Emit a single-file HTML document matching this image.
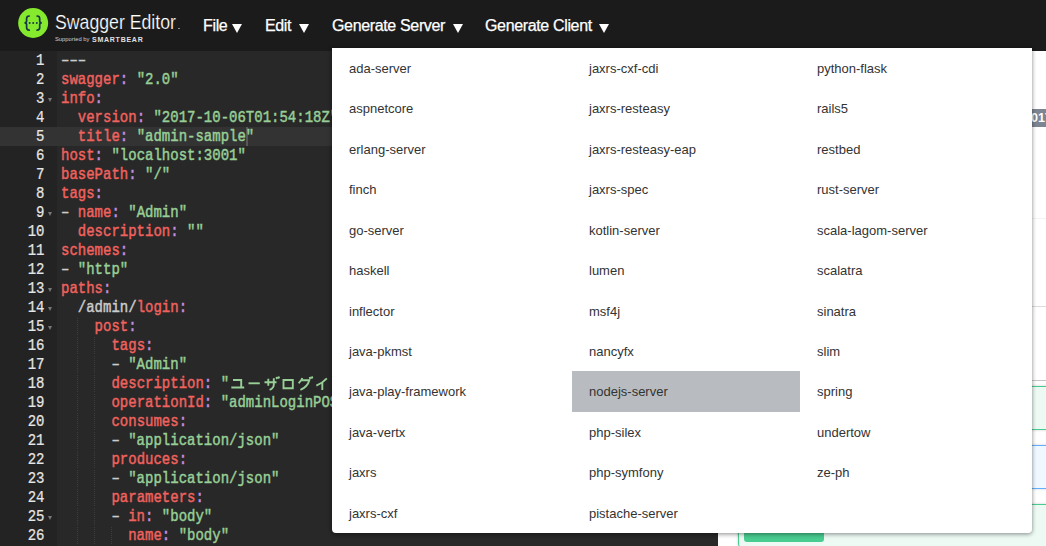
<!DOCTYPE html>
<html><head><meta charset="utf-8">
<style>
*{margin:0;padding:0;box-sizing:border-box}
html,body{width:1046px;height:546px;overflow:hidden;background:#fff;font-family:"Liberation Sans",sans-serif}
#top{position:absolute;left:0;top:0;width:1046px;height:51px;background:#1b1b1b}
#brand{position:absolute;left:55px;top:10px;color:#fff;-webkit-text-stroke:0.2px #1b1b1b;font-size:17.7px;line-height:23px;white-space:nowrap;transform:scaleY(1.13);transform-origin:0 0}
#sub{position:absolute;left:55px;top:35.5px;color:#d0d0d0;font-size:5.8px;line-height:7px;white-space:nowrap}
#sb{position:absolute;left:92px;top:36px;color:#e0e0e0;font-size:7px;line-height:8px;font-weight:bold;letter-spacing:0.75px;white-space:nowrap}
.mi{position:absolute;top:17px;color:#fff;font-size:16px;letter-spacing:-0.35px;white-space:nowrap;-webkit-text-stroke:0.25px #fff}
.tri{display:inline-block;width:0;height:0;border-left:5.2px solid transparent;border-right:5.2px solid transparent;border-top:9px solid #fff;margin-left:7.5px;vertical-align:-2px}
#ed{position:absolute;left:0;top:51px;width:718px;height:495px;background:#282828}
#gut{position:absolute;left:0;top:51px;width:57px;height:495px;background:#232323}
.al{position:absolute;left:0;width:718px;height:19px;background:#333}
.ln{position:absolute;left:0;width:44.5px;text-align:right;font-family:"Liberation Mono",monospace;font-size:14px;line-height:19px;color:#e6e6e6;font-weight:normal;-webkit-text-stroke:0.2px currentColor;transform:scaleY(1.15)}
.cl{position:absolute;left:61px;font-family:"Liberation Mono",monospace;font-size:14px;line-height:19px;color:#ccc;white-space:pre;font-weight:normal;-webkit-text-stroke:0.4px currentColor;transform:scaleY(1.15)}
.fa{position:absolute;left:48px;width:0;height:0;border-left:2.7px solid transparent;border-right:2.7px solid transparent;border-top:4.2px solid #777}
.ig{position:absolute;width:1px;height:17px;background:repeating-linear-gradient(to bottom,#3c3c3c 0 1px,transparent 1px 2px)}
.k{color:#f0625e}.s{color:#97cf97}.p{color:#c48fe0}
#right{position:absolute;left:718px;top:51px;width:328px;height:495px;background:#fff}
#dd{position:absolute;left:332px;top:48px;width:700px;height:485px;background:#fff;border-radius:0 0 4px 4px;box-shadow:0 0 4px rgba(0,0,0,.3),0 2px 4px rgba(0,0,0,.22)}
.it{position:absolute;height:40.42px;line-height:42px;font-size:13px;color:#333;white-space:nowrap;padding-left:17px}
.hl{background:#b8bcc0}
.ob{position:absolute;left:20px;width:400px;height:44px;border-radius:4px;border:1px solid #49cc90;background:#edfaf4;box-shadow:0 0 3px rgba(0,0,0,.19)}
.ob.b{border-color:#61affe;background:#eff7ff}
.mb{position:absolute;left:5px;top:5px;width:80px;height:32px;border-radius:3px;background:#49cc90}
</style></head><body>
<div id="top">
  <svg id="logosvg" width="60" height="51" style="position:absolute;left:0;top:0">
<circle cx="33.15" cy="23" r="15" fill="#85ea2d"/>
<g fill="none" stroke="#173647" stroke-width="1.7" stroke-linecap="round">
<path d="M29.2,16 C27.3,16 26.6,16.8 26.6,18.6 L26.6,21 C26.6,22.2 25.9,22.8 24.5,22.8 C25.9,22.8 26.6,23.4 26.6,24.6 L26.6,27.6 C26.6,29.4 27.3,30.2 29.2,30.2"/>
<path d="M37.1,16 C39,16 39.7,16.8 39.7,18.6 L39.7,21 C39.7,22.2 40.4,22.8 41.8,22.8 C40.4,22.8 39.7,23.4 39.7,24.6 L39.7,27.6 C39.7,29.4 39,30.2 37.1,30.2"/>
</g>
<g fill="#173647"><circle cx="29.6" cy="22.9" r="1"/><circle cx="33.2" cy="22.9" r="1"/><circle cx="36.8" cy="22.9" r="1"/></g>
</svg>
  <div id="brand">Swagger Editor</div><div style="position:absolute;left:178px;top:28px;width:2px;height:1px;background:#888"></div>
  <div id="sub">Supported by</div><div id="sb">SMARTBEAR</div>
  <div class="mi" style="left:203px">File<span class="tri" style="margin-left:5px"></span></div>
  <div class="mi" style="left:265px">Edit<span class="tri"></span></div>
  <div class="mi" style="left:332px">Generate Server<span class="tri"></span></div>
  <div class="mi" style="left:485px">Generate Client<span class="tri"></span></div>
</div>
<div id="ed"></div>
<div id="gut"></div>
<div class="al" style="top:127px"></div>
<div style="position:absolute;left:246px;top:127px;width:2px;height:19px;background:#585858"></div>
<div id="code"><!--CODE-->
<div class="ln" style="top:51px">1</div>
<div class="cl" style="top:51px">–––</div>
<div class="ln" style="top:70px">2</div>
<div class="cl" style="top:70px"><span class="k">swagger</span><span class="p">:</span> <span class="s">&quot;2.0&quot;</span></div>
<div class="ln" style="top:89px">3</div>
<div class="cl" style="top:89px"><span class="k">info</span><span class="p">:</span></div>
<div class="ln" style="top:108px">4</div>
<div class="cl" style="top:108px">  <span class="k">version</span><span class="p">:</span> <span class="s">&quot;2017-10-06T01:54:18Z&quot;</span></div>
<div class="ln" style="top:127px">5</div>
<div class="cl" style="top:127px">  <span class="k">title</span><span class="p">:</span> <span class="s">&quot;admin-sample&quot;</span></div>
<div class="ln" style="top:146px">6</div>
<div class="cl" style="top:146px"><span class="k">host</span><span class="p">:</span> <span class="s">&quot;localhost:3001&quot;</span></div>
<div class="ln" style="top:165px">7</div>
<div class="cl" style="top:165px"><span class="k">basePath</span><span class="p">:</span> <span class="s">&quot;/&quot;</span></div>
<div class="ln" style="top:184px">8</div>
<div class="cl" style="top:184px"><span class="k">tags</span><span class="p">:</span></div>
<div class="ln" style="top:203px">9</div>
<div class="cl" style="top:203px">– <span class="k">name</span><span class="p">:</span> <span class="s">&quot;Admin&quot;</span></div>
<div class="ln" style="top:222px">10</div>
<div class="cl" style="top:222px">  <span class="k">description</span><span class="p">:</span> <span class="s">&quot;&quot;</span></div>
<div class="ln" style="top:241px">11</div>
<div class="cl" style="top:241px"><span class="k">schemes</span><span class="p">:</span></div>
<div class="ln" style="top:260px">12</div>
<div class="cl" style="top:260px">– <span class="s">&quot;http&quot;</span></div>
<div class="ln" style="top:279px">13</div>
<div class="cl" style="top:279px"><span class="k">paths</span><span class="p">:</span></div>
<div class="ln" style="top:298px">14</div>
<div class="cl" style="top:298px">  /admin/<span class="k">login</span><span class="p">:</span></div>
<div class="ln" style="top:317px">15</div>
<div class="cl" style="top:317px">    <span class="k">post</span><span class="p">:</span></div>
<div class="ln" style="top:336px">16</div>
<div class="cl" style="top:336px">      <span class="k">tags</span><span class="p">:</span></div>
<div class="ln" style="top:355px">17</div>
<div class="cl" style="top:355px">      – <span class="s">&quot;Admin&quot;</span></div>
<div class="ln" style="top:374px">18</div>
<div class="cl" style="top:374px">      <span class="k">description</span><span class="p">:</span> <span class="s">&quot;</span></div>
<div class="ln" style="top:393px">19</div>
<div class="cl" style="top:393px">      <span class="k">operationId</span><span class="p">:</span> <span class="s">&quot;adminLoginPOST&quot;</span></div>
<div class="ln" style="top:412px">20</div>
<div class="cl" style="top:412px">      <span class="k">consumes</span><span class="p">:</span></div>
<div class="ln" style="top:431px">21</div>
<div class="cl" style="top:431px">      – <span class="s">&quot;application/json&quot;</span></div>
<div class="ln" style="top:450px">22</div>
<div class="cl" style="top:450px">      <span class="k">produces</span><span class="p">:</span></div>
<div class="ln" style="top:469px">23</div>
<div class="cl" style="top:469px">      – <span class="s">&quot;application/json&quot;</span></div>
<div class="ln" style="top:488px">24</div>
<div class="cl" style="top:488px">      <span class="k">parameters</span><span class="p">:</span></div>
<div class="ln" style="top:507px">25</div>
<div class="cl" style="top:507px">      – <span class="k">in</span><span class="p">:</span> <span class="s">&quot;body&quot;</span></div>
<div class="ln" style="top:526px">26</div>
<div class="cl" style="top:526px">        <span class="k">name</span><span class="p">:</span> <span class="s">&quot;body&quot;</span></div>
<div class="fa" style="top:97.5px"></div>
<div class="fa" style="top:211.5px"></div>
<div class="fa" style="top:287.5px"></div>
<div class="fa" style="top:306.5px"></div>
<div class="fa" style="top:325.5px"></div>
<div class="fa" style="top:515.5px"></div>
<div class="ig" style="left:77px;top:318px"></div>
<div class="ig" style="left:77px;top:337px"></div>
<div class="ig" style="left:77px;top:356px"></div>
<div class="ig" style="left:77px;top:375px"></div>
<div class="ig" style="left:77px;top:394px"></div>
<div class="ig" style="left:77px;top:413px"></div>
<div class="ig" style="left:77px;top:432px"></div>
<div class="ig" style="left:77px;top:451px"></div>
<div class="ig" style="left:77px;top:470px"></div>
<div class="ig" style="left:77px;top:489px"></div>
<div class="ig" style="left:77px;top:508px"></div>
<div class="ig" style="left:77px;top:527px"></div>
<div class="ig" style="left:94px;top:337px"></div>
<div class="ig" style="left:94px;top:356px"></div>
<div class="ig" style="left:94px;top:375px"></div>
<div class="ig" style="left:94px;top:394px"></div>
<div class="ig" style="left:94px;top:413px"></div>
<div class="ig" style="left:94px;top:432px"></div>
<div class="ig" style="left:94px;top:451px"></div>
<div class="ig" style="left:94px;top:470px"></div>
<div class="ig" style="left:94px;top:489px"></div>
<div class="ig" style="left:94px;top:508px"></div>
<div class="ig" style="left:94px;top:527px"></div>
<div class="ig" style="left:111px;top:527px"></div>
<!--/CODE--></div>
<svg width="120" height="546" style="position:absolute;left:220px;top:0">
<g fill="none" stroke="#97cf97" stroke-width="1.9" transform="translate(-220,-0.3)">
<path d="M233,380.3 H241.2 V387.8 M231.3,387.8 H244.2"/>
<path d="M248.5,383.6 H259.8"/>
<path d="M264.5,382.6 H276.5 M268.3,379 V386 M273.8,378.6 V385 Q273.6,388.6 269.6,390.2 M276.3,377.3 L277.2,379.3 M278.3,376.8 L279.2,378.8"/>
<path d="M283.5,380.3 H292.8 V388.6 H283.5 Z"/>
<path d="M302.3,378.3 Q301.2,381.6 298.6,383.6 M301.2,380.6 H309.3 Q307.6,387.2 300.4,390.2 M309.6,377.3 L310.5,379.3 M311.6,376.8 L312.5,378.8"/>
<path d="M326.8,378.6 Q322.2,383.6 316.3,386 M322.3,382.8 V390.3"/>
</g></svg>
<div id="right">
<div style="position:absolute;left:300px;top:58px;width:60px;height:18px;background:#7d8492;border-radius:9px;color:#fff;font-size:12.5px;font-weight:bold;line-height:18px;padding-left:6px;white-space:nowrap">2017-10-06T01:54:18Z</div>
<div style="position:absolute;left:0;top:167px;width:328px;height:1px;background:#f3f3f3"></div>
<div style="position:absolute;left:0;top:255px;width:328px;height:1px;background:#dcdcdc"></div>
<div style="position:absolute;left:20px;top:329px;width:308px;height:1px;background:#c4c6cb"></div>
<div class="ob g" style="top:335px"></div>
<div class="ob b" style="top:394px"></div>
<div class="ob g" style="top:453px"><div class="mb"></div></div>
</div>
<div id="dd"><!--DD-->
<div class="it" style="left:0px;top:0.00px;width:240px">ada-server</div>
<div class="it" style="left:0px;top:40.42px;width:240px">aspnetcore</div>
<div class="it" style="left:0px;top:80.84px;width:240px">erlang-server</div>
<div class="it" style="left:0px;top:121.26px;width:240px">finch</div>
<div class="it" style="left:0px;top:161.68px;width:240px">go-server</div>
<div class="it" style="left:0px;top:202.10px;width:240px">haskell</div>
<div class="it" style="left:0px;top:242.52px;width:240px">inflector</div>
<div class="it" style="left:0px;top:282.94px;width:240px">java-pkmst</div>
<div class="it" style="left:0px;top:323.36px;width:240px">java-play-framework</div>
<div class="it" style="left:0px;top:363.78px;width:240px">java-vertx</div>
<div class="it" style="left:0px;top:404.20px;width:240px">jaxrs</div>
<div class="it" style="left:0px;top:444.62px;width:240px">jaxrs-cxf</div>
<div class="it" style="left:240px;top:0.00px;width:228px">jaxrs-cxf-cdi</div>
<div class="it" style="left:240px;top:40.42px;width:228px">jaxrs-resteasy</div>
<div class="it" style="left:240px;top:80.84px;width:228px">jaxrs-resteasy-eap</div>
<div class="it" style="left:240px;top:121.26px;width:228px">jaxrs-spec</div>
<div class="it" style="left:240px;top:161.68px;width:228px">kotlin-server</div>
<div class="it" style="left:240px;top:202.10px;width:228px">lumen</div>
<div class="it" style="left:240px;top:242.52px;width:228px">msf4j</div>
<div class="it" style="left:240px;top:282.94px;width:228px">nancyfx</div>
<div class="it hl" style="left:240px;top:323.36px;width:228px">nodejs-server</div>
<div class="it" style="left:240px;top:363.78px;width:228px">php-silex</div>
<div class="it" style="left:240px;top:404.20px;width:228px">php-symfony</div>
<div class="it" style="left:240px;top:444.62px;width:228px">pistache-server</div>
<div class="it" style="left:468px;top:0.00px;width:232px">python-flask</div>
<div class="it" style="left:468px;top:40.42px;width:232px">rails5</div>
<div class="it" style="left:468px;top:80.84px;width:232px">restbed</div>
<div class="it" style="left:468px;top:121.26px;width:232px">rust-server</div>
<div class="it" style="left:468px;top:161.68px;width:232px">scala-lagom-server</div>
<div class="it" style="left:468px;top:202.10px;width:232px">scalatra</div>
<div class="it" style="left:468px;top:242.52px;width:232px">sinatra</div>
<div class="it" style="left:468px;top:282.94px;width:232px">slim</div>
<div class="it" style="left:468px;top:323.36px;width:232px">spring</div>
<div class="it" style="left:468px;top:363.78px;width:232px">undertow</div>
<div class="it" style="left:468px;top:404.20px;width:232px">ze-ph</div>
<!--/DD--></div>
</body></html>
